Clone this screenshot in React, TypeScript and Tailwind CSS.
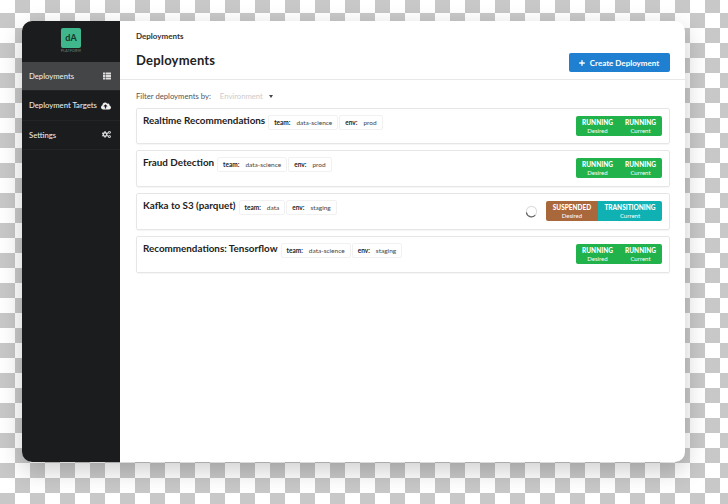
import { Plus } from "lucide-react";
import { FaThList, FaCloudUploadAlt, FaCogs } from "react-icons/fa";

const font = { sans: "font-['Lato','Open_Sans',sans-serif]" };

const deployments = [
  { name: "Realtime Recommendations", team: "data-science", env: "prod", desired: "RUNNING", current: "RUNNING" },
  { name: "Fraud Detection", team: "data-science", env: "prod", desired: "RUNNING", current: "RUNNING" },
  { name: "Kafka to S3 (parquet)", team: "data", env: "staging", desired: "SUSPENDED", current: "TRANSITIONING", busy: true },
  { name: "Recommendations: Tensorflow", team: "data-science", env: "staging", desired: "RUNNING", current: "RUNNING" },
];

const statusStyle: Record<string, string> = {
  RUNNING: "w-[43px] bg-[#21b24b]",
  SUSPENDED: "w-[52px] bg-[#a9673c]",
  TRANSITIONING: "w-[64px] bg-[#0fb1b3]",
};

function Tag({ label, value }: { label: string; value: string }) {
  return (
    <span className="flex h-[15px] items-center gap-[6px] rounded-[2px] border border-[#f1f1f1] bg-white px-[5px] text-[6.5px] text-[#444]">
      <b className="font-bold text-[#222]">{label}</b>
      <span>{value}</span>
    </span>
  );
}

function Status({ title, sub }: { title: string; sub: string }) {
  return (
    <div className={`flex flex-col items-center justify-center text-white ${statusStyle[title]}`}>
      <span className="text-[6.5px] leading-[9px] font-black">{title}</span>
      <span className="text-[6px] leading-[7px]">{sub}</span>
    </div>
  );
}

function NavItem({ label, active, icon }: { label: string; active?: boolean; icon: React.ReactNode }) {
  return (
    <div className={`flex h-[29.4px] items-center justify-between border-b border-[#232426] pr-[9px] pl-[7px] text-[7.7px] font-medium text-[#e8e8e8] ${active ? "bg-[#434547]" : ""}`}>
      <span className="pt-[1px]">{label}</span>
      {icon}
    </div>
  );
}

export default function App() {
  return (
    <div className="h-[504px] w-[728px] overflow-hidden bg-[conic-gradient(#c8c8c8_25%,#ffffff_0_50%,#c8c8c8_0_75%,#ffffff_0)] bg-[length:30px_30px] bg-[position:0_-2px] pt-[21px] pl-[22px]">
      <div className={`flex h-[441px] w-[663px] overflow-hidden rounded-[10px] bg-white shadow-[0_8px_24px_rgba(0,0,0,0.2)] ${font.sans}`}>
        <aside className="w-[98px] shrink-0 bg-[#1b1c1e]">
          <div className="flex h-[41px] flex-col items-center pt-[7px]">
            <div className="flex h-[20px] w-[20px] items-center justify-center rounded-[2px] bg-[#3fb68b] text-[9px] font-bold text-[#15352b]">dA</div>
            <span className="mt-[1px] text-[3.5px] tracking-[0.2px] text-[#6f8f84]">PLATFORM</span>
          </div>
          <NavItem label="Deployments" active icon={<FaThList size={8} className="text-[#ddd]" />} />
          <NavItem label="Deployment Targets" icon={<FaCloudUploadAlt size={10} className="text-[#eee]" />} />
          <NavItem label="Settings" icon={<FaCogs size={9} className="text-[#ddd]" />} />
        </aside>
        <main className="flex min-w-0 flex-1 flex-col">
          <header className="border-b border-[#e8e8e8] pr-[15px] pl-[16px]">
            <div className="pt-[10px] text-[8px] leading-[10px] font-bold text-[#333]">Deployments</div>
            <div className="mt-[6px] flex h-[32px] items-start justify-between">
              <h1 className="pt-[4px] text-[13px] leading-[18px] font-bold tracking-[0.2px] text-[#222]">Deployments</h1>
              <button className="mt-[6px] flex h-[19px] w-[101px] items-center justify-center gap-[4px] rounded-[2px] bg-[#1f7fd0] pr-[2px] text-[8px] font-bold text-white">
                <Plus size={8} strokeWidth={4} />
                Create Deployment
              </button>
            </div>
          </header>
          <section className="flex flex-col gap-[6px] pr-[15px] pl-[16px]">
            <div className="mt-[11px] flex h-[11px] items-center text-[7.7px] text-[#555]">
              <span>Filter deployments by:</span>
              <span className="ml-[9px] text-[#cccccc]">Environment</span>
              <span className="ml-[6px] h-0 w-0 border-x-[2.5px] border-t-[3px] border-x-transparent border-t-[#444]" />
            </div>
            {deployments.map((d, i) => (
              <div key={d.name} className={`flex items-start rounded-[2px] border border-[#e6e6e6] pt-[4px] pr-[7px] pl-[6px] shadow-[0_1px_1px_rgba(0,0,0,0.04)] ${i === 0 ? "h-[36px]" : "h-[37px]"}`}>
                <span className="text-[9.85px] leading-[14px] font-bold whitespace-nowrap text-[#222]">{d.name}</span>
                <div className="mt-[2px] ml-[3px] flex gap-[1px]">
                  <Tag label="team:" value={d.team} />
                  <Tag label="env:" value={d.env} />
                </div>
                <div className="mt-[3px] ml-auto flex items-center">
                  {d.busy && (
                    <svg viewBox="0 0 14 14" className="mr-[8px] h-[13px] w-[13px]">
                      <circle cx="7" cy="7" r="5.5" fill="none" stroke="#dddddd" strokeWidth="1.2" />
                      <path d="M1.5 8a5.5 5.5 0 0 0 9.5 3" fill="none" stroke="#666666" strokeWidth="1.2" />
                    </svg>
                  )}
                  <div className="flex h-[20px] overflow-hidden rounded-[2px]">
                    <Status title={d.desired} sub="Desired" />
                    <Status title={d.current} sub="Current" />
                  </div>
                </div>
              </div>
            ))}
          </section>
        </main>
      </div>
    </div>
  );
}
